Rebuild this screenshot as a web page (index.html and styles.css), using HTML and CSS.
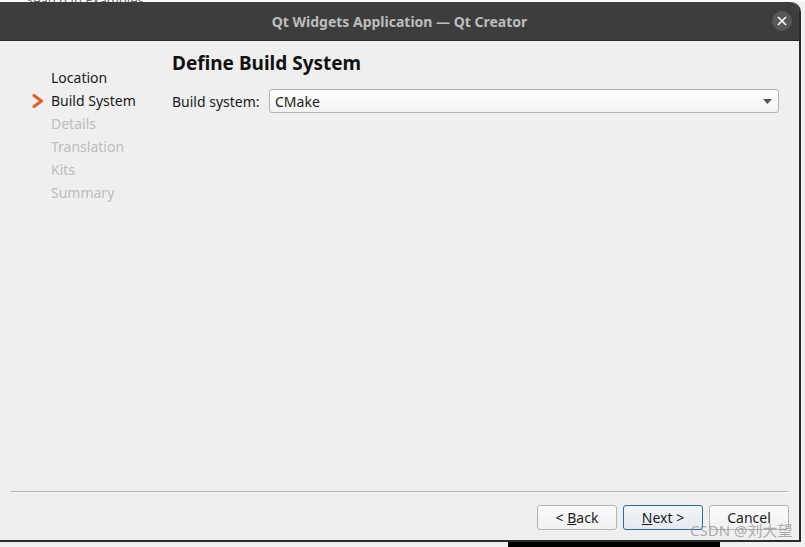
FILE: index.html
```html
<!DOCTYPE html>
<html>
  <head>
    <meta charset="UTF-8">
    <title>Qt Widgets Application</title>
    <link rel="stylesheet" href="styles.css">
  </head>
  <body>
    <div class="behind-top">Search in Examples</div>
    <div class="window">
      <div class="titlebar">
        <span class="title">Qt Widgets Application — Qt Creator</span>
        <span class="close">
          <svg width="10" height="10" viewBox="0 0 10 10">
            <path d="M1 1 L9 9 M9 1 L1 9" stroke="#fff" stroke-width="1.6"/>
          </svg>
        </span>
      </div>
      <div class="content">
        <div class="main">
          <ul class="steps">
            <li class="done">Location</li>
            <li class="current">
              <svg class="chevron" width="12" height="14" viewBox="0 0 12 14">
                <path d="M2 1.5 L9.5 7 L2 12.5" fill="none" stroke="#e0602a" stroke-width="3" stroke-linejoin="round" stroke-linecap="round"/>
              </svg>
              Build System
            </li>
            <li>Details</li>
            <li>Translation</li>
            <li>Kits</li>
            <li>Summary</li>
          </ul>
          <div class="page">
            <h1>Define Build System</h1>
            <div class="field">
              <label>Build system:</label>
              <div class="combo">
                <span>CMake</span>
                <svg width="9" height="5" viewBox="0 0 9 5"><path d="M0 0 H9 L4.5 5 Z" fill="#555"/></svg>
              </div>
            </div>
          </div>
        </div>
        <div class="separator"></div>
        <div class="buttons">
          <button><span>&lt; <u>B</u>ack</span></button>
          <button class="default"><span><u>N</u>ext &gt;</span></button>
          <button><span>Cancel</span></button>
        </div>
      </div>
    </div>
    <div class="below">
      <div class="dark-block"></div>
    </div>
    <div class="watermark">CSDN @刘大望</div>
  </body>
</html>
```

FILE: styles.css
```css
body {
  margin: 0;
  width: 805px;
  height: 547px;
  overflow: hidden;
  background: #f0f0f0;
  font-family: "Noto Sans", "DejaVu Sans", sans-serif;
  position: relative;
}

.behind-top {
  height: 2px;
  overflow: hidden;
  background: #fafafa;
  padding-left: 26px;
  font-size: 13px;
  line-height: 0;
  color: #666;
}

.window {
  width: 799px;
  border-right: 2px solid #2b2b2b;
  border-bottom: 2px solid #2b2b2b;
  border-top-right-radius: 10px;
  background: #efefef;
}

.titlebar {
  height: 38px;
  background: #3d3d3d;
  border-top-right-radius: 9px;
  border-bottom: 1px solid #282828;
  display: flex;
  align-items: center;
  justify-content: center;
  position: relative;
}

.title {
  color: #bdbdbd;
  font-weight: bold;
  font-size: 14px;
}

.close {
  position: absolute;
  right: 7px;
  top: 9px;
  width: 20px;
  height: 20px;
  border-radius: 50%;
  background: #575757;
  display: flex;
  align-items: center;
  justify-content: center;
}

.content {
  height: 499px;
  display: flex;
  flex-direction: column;
}

.main {
  flex: 1;
  display: flex;
}

.steps {
  list-style: none;
  margin: 0;
  padding: 27px 0 0 51px;
  width: 172px;
  box-sizing: border-box;
}

.steps li {
  font-size: 14px;
  height: 23px;
  line-height: 20px;
  color: #bcbcbc;
  position: relative;
  white-space: nowrap;
}

.steps li.done,
.steps li.current {
  color: #1a1a1a;
}

.chevron {
  position: absolute;
  left: -19px;
  top: 3px;
}

.page {
  flex: 1;
  padding: 10px 20px 0 0;
}

h1 {
  margin: 0 0 14px 0;
  font-size: 19px;
  line-height: 24px;
  font-weight: bold;
  color: #111;
}

.field {
  display: flex;
  align-items: center;
}

label {
  font-size: 14px;
  color: #1a1a1a;
  width: 97px;
}

.combo {
  flex: 1;
  height: 24px;
  box-sizing: border-box;
  border: 1px solid #b2b2b2;
  border-radius: 3px;
  background: linear-gradient(#fdfdfd, #f3f3f3);
  display: flex;
  align-items: center;
  justify-content: space-between;
  padding: 0 6px 0 5px;
  font-size: 14px;
  color: #1a1a1a;
}

.separator {
  margin: 0 11px 0 11px;
  border-top: 1px solid #b5b5b5;
  border-bottom: 1px solid #f8f8f8;
}

.buttons {
  display: flex;
  justify-content: flex-end;
  gap: 6px;
  padding: 12px 10px 10px 0;
}

button {
  width: 80px;
  height: 25px;
  box-sizing: border-box;
  border: 1px solid #b3b3b3;
  border-radius: 3px;
  background: linear-gradient(#fbfbfb, #f1f1f1);
  font-family: "Noto Sans", "DejaVu Sans", sans-serif;
  font-size: 14px;
  color: #1a1a1a;
  padding: 0;
}

button.default {
  border-color: #30699c;
  background: linear-gradient(#f2f5f8, #e4eaf0);
}

.below {
  height: 6px;
  position: relative;
}

.dark-block {
  position: absolute;
  left: 508px;
  width: 212px;
  top: 0;
  height: 6px;
  background: #000;
}

.watermark {
  position: absolute;
  left: 690px;
  top: 519px;
  font-size: 15px;
  color: rgba(140, 140, 140, 0.7);
  font-family: "Noto Sans", "Noto Sans CJK SC", sans-serif;
}
```
